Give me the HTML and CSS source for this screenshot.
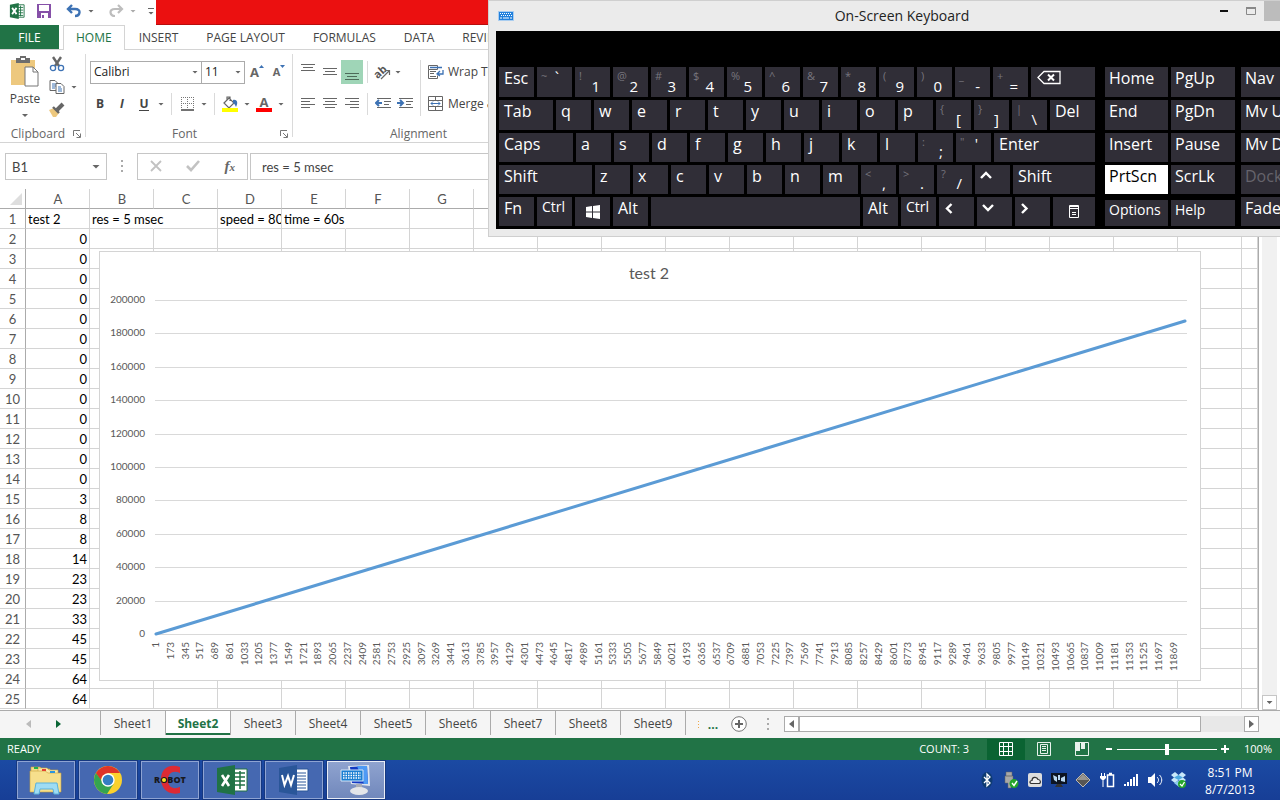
FILE: index.html
```html
<!DOCTYPE html>
<html lang="en">
<head>
<meta charset="utf-8">
<title>Spreadsheet desktop</title>
<link rel="stylesheet" href="styles.css">
</head>
<body>
<div class="desktop">
  <header class="titlebar">
    <div class="quick-access">
      <svg class="qa-logo" width="18" height="18" viewBox="0 0 18 18" aria-hidden="true"><path d="M9 2h8v14H9z" fill="#fff" stroke="#217346"/><path d="M10 5h6M10 8h6M10 11h6M10 14h6M13 3v12" stroke="#217346"/><path d="M1 2l10-2v18l-10-2z" fill="#217346"/><path d="M3.500 5.500l5 7M8.500 5.500l-5 7" stroke="#fff" stroke-width="2"/></svg>
      <button class="qa-save" aria-label="Save"><svg width="14" height="14" viewBox="0 0 14 14"><path d="M0 0h14v14H0z" fill="#8650a8"/><path d="M2 1h10v6H2zM4 9h7v5H4z" fill="#fff"/><path d="M5 11h2v3H5z" fill="#8650a8"/></svg></button>
      <button class="qa-undo" aria-label="Undo"><svg width="16" height="14" viewBox="0 0 16 14"><path d="M6 1L2 5l4 4M2 5h7c7 0 5 7 0 7" fill="none" stroke="#3d72b4" stroke-width="2.400"/></svg><i class="caret"></i></button>
      <button class="qa-redo" aria-label="Redo"><svg width="16" height="14" viewBox="0 0 16 14"><path d="M10 1l4 4-4 4M14 5H7c-7 0-5 7 0 7" fill="none" stroke="#bdbdbd" stroke-width="2.200"/></svg><i class="caret pale"></i></button>
      <button class="qa-more" aria-label="Customize"><i class="bar"></i><i class="caret"></i></button>
    </div>
    <div class="redacted"></div>
  </header>

  <nav class="ribbon-tabs">
    <a class="file" href="#file">FILE</a>
    <a class="current" href="#home">HOME</a>
    <a href="#insert">INSERT</a>
    <a href="#layout">PAGE LAYOUT</a>
    <a href="#formulas">FORMULAS</a>
    <a href="#data">DATA</a>
    <a href="#review">REVIEW</a>
  </nav>

  <section class="ribbon">
    <div class="group clipboard">
      <div class="group-body">
        <button class="paste"><svg width="30" height="32" viewBox="0 0 30 32"><path d="M1 4h24v25H1z" fill="#edc87e"/><path d="M6 2h4V0h6v2h4v5H6z" fill="#6d6d6d"/><path d="M11 2h4v2h-4z" fill="#fff"/><path d="M15 11h8l5 5v14H15z" fill="#fff" stroke="#777"/><path d="M23 11v5h5" fill="none" stroke="#777"/></svg><span>Paste</span><i class="caret"></i></button>
        <div class="clip-tools">
          <button aria-label="Cut"><svg width="16" height="16" viewBox="0 0 16 16"><path d="M4 1l6 9M12 1L6 10" stroke="#666" stroke-width="2.400"/><circle cx="4" cy="12" r="2.600" fill="#fff" stroke="#3d72b4" stroke-width="1.300"/><circle cx="12" cy="12" r="2.600" fill="#fff" stroke="#3d72b4" stroke-width="1.300"/></svg></button>
          <button aria-label="Copy"><svg width="16" height="16" viewBox="0 0 16 16"><path d="M1 1.500h5l3 3v7H1z" fill="#fff" stroke="#666"/><path d="M3 5h4M3 7h4M3 9h3" stroke="#3d72b4"/><path d="M7 4.500h5l3 3v7H7z" fill="#fff" stroke="#666"/><path d="M9 8h3M9 10h4M9 12h4" stroke="#3d72b4"/></svg><i class="caret"></i></button>
          <button aria-label="Format Painter"><svg width="16" height="16" viewBox="0 0 16 16"><path d="M0 8l5-2 5 5-3 4-3 0z" fill="#edc87e"/><path d="M4 5l6 6" stroke="#666" stroke-width="2.400"/><path d="M8 8l6-6" stroke="#666" stroke-width="4"/></svg></button>
        </div>
      </div>
      <div class="group-name"><span>Clipboard</span><svg class="launcher" width="8" height="8" viewBox="0 0 8 8"><path d="M.5 6V.5H7M3 3l4 4M7.500 3.500v4h-4" fill="none" stroke="#777"/></svg></div>
    </div>

    <div class="group font">
      <div class="group-body stack">
        <div class="tool-row">
          <span class="combo family"><select aria-label="Font"><option>Calibri</option></select></span>
          <span class="combo size"><select aria-label="Font size"><option>11</option></select></span>
          <button class="tool" aria-label="Increase font size"><b class="letter-big">A</b><svg width="5" height="14" viewBox="0 0 5 14"><path d="M0 3l2.500-3L5 3z" fill="#3d72b4"/></svg></button>
          <button class="tool" aria-label="Decrease font size"><b class="letter-small">A</b><svg width="5" height="14" viewBox="0 0 5 14"><path d="M0 0l2.500 3L5 0z" fill="#3d72b4"/></svg></button>
        </div>
        <div class="tool-row">
          <button class="tool"><b>B</b></button>
          <button class="tool"><b class="italic">I</b></button>
          <button class="tool"><b class="under">U</b></button>
          <button class="drop" aria-label="Underline styles"><i class="caret"></i></button>
          <i class="rule"></i>
          <button class="tool" aria-label="Borders"><svg width="13" height="14" viewBox="0 0 13 14"><path d="M.5 0v12M6.500 0v12M12.500 0v12M0 .5h13M0 6.500h13" stroke="#777" stroke-dasharray="1 1"/><path d="M0 13h13" stroke="#444" stroke-width="1.500"/></svg></button>
          <button class="drop" aria-label="Border styles"><i class="caret"></i></button>
          <i class="rule"></i>
          <button class="tool" aria-label="Fill color"><svg width="16" height="16" viewBox="0 0 16 16"><path d="M2 7l5-5 5 5-5 5zM5 5V1h3v4" fill="#fff" stroke="#666" stroke-width="1.200"/><path d="M11 4c5-1 5 4 3 7-1-2-1-3-3-4z" fill="#3d72b4"/><path d="M0 12h16v4H0z" fill="#ff0"/></svg></button>
          <button class="drop" aria-label="Fill colors"><i class="caret"></i></button>
          <button class="tool" aria-label="Font color"><b class="font-color">A</b></button>
          <button class="drop" aria-label="Font colors"><i class="caret"></i></button>
        </div>
      </div>
      <div class="group-name"><span>Font</span><svg class="launcher" width="8" height="8" viewBox="0 0 8 8"><path d="M.5 6V.5H7M3 3l4 4M7.500 3.500v4h-4" fill="none" stroke="#777"/></svg></div>
    </div>

    <div class="group alignment">
      <div class="group-body">
        <div class="stack">
          <div class="tool-row">
            <button class="tool" aria-label="Top align"><svg width="14" height="16" viewBox="0 0 14 16"><path d="M0 .5h14M2 3.500h10M0 6.500h14" stroke="#666"/></svg></button>
            <button class="tool" aria-label="Middle align"><svg width="14" height="16" viewBox="0 0 14 16"><path d="M0 4.500h14M2 7.500h10M0 10.500h14" stroke="#666"/></svg></button>
            <button class="tool on" aria-label="Bottom align"><svg width="14" height="16" viewBox="0 0 14 16"><path d="M0 9.500h14M2 12.500h10M0 15.500h14" stroke="#4d6b59"/></svg></button>
            <i class="rule"></i>
            <button class="tool" aria-label="Orientation"><svg width="18" height="16" viewBox="0 0 18 16"><text x="0" y="12" font-size="11" font-weight="700" fill="#555" transform="rotate(-42 6 9)">ab</text><path d="M7 15l8-8M11 6.500h4.500V11" fill="none" stroke="#666" stroke-width="1.200"/></svg></button>
            <button class="drop near" aria-label="Orientation options"><i class="caret"></i></button>
          </div>
          <div class="tool-row">
            <button class="tool" aria-label="Align left"><svg width="14" height="12" viewBox="0 0 14 12"><path d="M0 .5h14M0 3.500h9M0 6.500h14M0 9.500h9" stroke="#666"/></svg></button>
            <button class="tool" aria-label="Center"><svg width="14" height="12" viewBox="0 0 14 12"><path d="M0 .5h14M2 3.500h10M0 6.500h14M2 9.500h10" stroke="#666"/></svg></button>
            <button class="tool" aria-label="Align right"><svg width="14" height="12" viewBox="0 0 14 12"><path d="M0 .5h14M5 3.500h9M0 6.500h14M5 9.500h9" stroke="#666"/></svg></button>
            <i class="rule"></i>
            <button class="tool" aria-label="Decrease indent"><svg width="16" height="12" viewBox="0 0 16 12"><path d="M2 .5h14M9 3.500h7M9 6.500h5M2 9.500h14" stroke="#666"/><path d="M7 5H2M4 2L1 5l3 3" fill="none" stroke="#3d72b4" stroke-width="2"/></svg></button>
            <button class="tool" aria-label="Increase indent"><svg width="16" height="12" viewBox="0 0 16 12"><path d="M2 .5h14M9 3.500h7M9 6.500h5M2 9.500h14" stroke="#666"/><path d="M0 5h5M3 2l3 3-3 3" fill="none" stroke="#3d72b4" stroke-width="2"/></svg></button>
          </div>
        </div>
        <i class="rule tall"></i>
        <div class="stack">
          <button class="text-tool"><svg width="16" height="16" viewBox="0 0 16 16"><path d="M.5 1.500h9v4h-9zM.5 5.500v9h9v-3" fill="#fff" stroke="#666"/><path d="M2 7.500h6M2 9.500h4M2 12.500h6" stroke="#666"/><path d="M2 3.500h12M15 6v4h-5M12 7l-3 3 3 2" fill="none" stroke="#3d72b4" stroke-width="1.300"/></svg>Wrap Text</button>
          <button class="text-tool"><svg width="16" height="16" viewBox="0 0 16 16"><path d="M.5.5h14v14H.5zM.5 4.500h14M.5 10.500h14M7.500 1v3M7.500 11v3" fill="#fff" stroke="#666"/><path d="M3 7.500h9M5 5.500l-2 2 2 2M10 5.500l2 2-2 2" fill="none" stroke="#3d72b4"/></svg>Merge &amp; Center</button>
        </div>
      </div>
      <div class="group-name"><span>Alignment</span></div>
    </div>
  </section>

  <div class="formula-bar">
    <span class="name-box"><input aria-label="Name box" value="B1"><i class="caret large"></i></span>
    <span class="grip"></span>
    <div class="formula-tools">
      <button aria-label="Cancel"><svg width="12" height="12" viewBox="0 0 12 12"><path d="M1 1l10 10M11 1L1 11" stroke="#c2c2c2" stroke-width="1.800"/></svg></button>
      <button aria-label="Enter"><svg width="14" height="12" viewBox="0 0 14 12"><path d="M1 6l4 4 8-9" fill="none" stroke="#c2c2c2" stroke-width="2.600"/></svg></button>
      <button class="fx" aria-label="Insert function">f<small>x</small></button>
    </div>
    <input class="formula" aria-label="Formula" value="res = 5 msec">
  </div>

  <main class="workbook">
    <div class="sheet">
      <table class="cells" id="cells"></table>
      <svg class="chart" id="chart" viewBox="0 0 1100 428" role="img" aria-label="test 2"></svg>
    </div>
    <div class="v-scroll"><button aria-label="Scroll down"><i class="caret"></i></button></div>
  </main>

  <footer class="sheet-bar">
    <div class="sheet-nav">
      <button aria-label="Previous sheet"><svg width="5" height="8" viewBox="0 0 5 8"><path d="M5 0v8L0 4z" fill="#bbb"/></svg></button>
      <button aria-label="Next sheet"><svg width="5" height="8" viewBox="0 0 5 8"><path d="M0 0v8l5-4z" fill="#0b6636"/></svg></button>
    </div>
    <nav class="sheet-tabs">
      <a href="#s1">Sheet1</a><a class="current" href="#s2">Sheet2</a><a href="#s3">Sheet3</a><a href="#s4">Sheet4</a><a href="#s5">Sheet5</a><a href="#s6">Sheet6</a><a href="#s7">Sheet7</a><a href="#s8">Sheet8</a><a href="#s9">Sheet9</a>
    </nav>
    <i class="next-tab"></i>
    <button class="more">...</button>
    <button class="add" aria-label="New sheet"><svg width="16" height="16" viewBox="0 0 16 16"><circle cx="8" cy="8" r="7.300" fill="#fff" stroke="#777"/><path d="M8 4v8M4 8h8" stroke="#666" stroke-width="2"/></svg></button>
    <span class="grip"></span>
    <div class="h-scroll">
      <button aria-label="Scroll left"><svg width="5" height="8" viewBox="0 0 5 8"><path d="M5 0v8L0 4z" fill="#666"/></svg></button>
      <i class="thumb"></i><i class="track"></i>
      <button aria-label="Scroll right"><svg width="5" height="8" viewBox="0 0 5 8"><path d="M0 0v8l5-4z" fill="#666"/></svg></button>
    </div>
  </footer>

  <div class="status">
    <span class="ready">READY</span>
    <span class="count">COUNT: 3</span>
    <button class="view on" aria-label="Normal"><svg width="14" height="14" viewBox="0 0 14 14"><path d="M.5.5h13v13H.5zM4.500 0v14M9.500 0v14M0 4.500h14M0 9.500h14" fill="none" stroke="#fff"/></svg></button>
    <button class="view" aria-label="Page layout"><svg width="14" height="14" viewBox="0 0 14 14"><path d="M.5.5h13v13H.5zM3.500 2.500h7v9h-7zM5 4.500h4M5 6.500h4M5 8.500h4" fill="none" stroke="#e8f2ec"/></svg></button>
    <button class="view" aria-label="Page break preview"><svg width="14" height="14" viewBox="0 0 14 14"><path d="M.5.5h13v13H.5z" fill="none" stroke="#e8f2ec"/><path d="M0 0h5v9H0zM6 0h4v7H6z" fill="#e8f2ec"/></svg></button>
    <button class="zoom-step" aria-label="Zoom out"><svg width="8" height="8" viewBox="0 0 8 8"><path d="M1 4h6" stroke="#fff" stroke-width="2"/></svg></button>
    <input class="zoom" type="range" min="0" max="100" value="50" aria-label="Zoom">
    <button class="zoom-step" aria-label="Zoom in"><svg width="8" height="8" viewBox="0 0 8 8"><path d="M0 4h8M4 0v8" stroke="#fff" stroke-width="2"/></svg></button>
    <span class="percent">100%</span>
  </div>

  <div class="taskbar">
    <div class="apps">
      <button aria-label="File Explorer"><svg width="34" height="32" viewBox="0 0 34 32"><path d="M2 3h9l2 2h8v8H2z" fill="#f5dc86" stroke="#c9a23c" stroke-width=".6"/><path d="M9 4h9l2 2h9v20H9z" fill="#f9e9a8" stroke="#c9a23c" stroke-width=".6"/><path d="M1 7h15l3 2h13v19H1z" fill="#f6df8c" stroke="#c9a23c" stroke-width=".6"/><path d="M5 3h4v2H5z" fill="#25b04a"/><path d="M13 5h4v2h-4z" fill="#e4412f"/><path d="M21 7h5v2h-5z" fill="#2b95df"/><path d="M5 30l2-11h21l2 11h-5l-1-5H11l-1 5z" fill="#9edcf4" stroke="#5bb2dc"/></svg></button>
      <button aria-label="Chrome"><svg width="30" height="30" viewBox="0 0 30 30"><circle cx="15" cy="15" r="14" fill="#fbd12d"/><path d="M2.900 8A14 14 0 0 1 27.100 8H15l-6 3.500-1.500 4z" fill="#de3429"/><path d="M2.900 8A14 14 0 0 0 14 29l6.500-10H11z" fill="#34a44f"/><circle cx="15" cy="15" r="6.700" fill="#fff"/><circle cx="15" cy="15" r="5.300" fill="#347ec2"/></svg></button>
      <button aria-label="RobotC"><svg width="34" height="32" viewBox="0 0 34 32"><path d="M27 9V3C15-1 8 6 8 15s7 17 19 14v-6c-7 3-12 0-12-7s5-10 12-7z" fill="#dd2a34"/><text x="17" y="19" text-anchor="middle" font-size="9" font-weight="800" fill="#18181c">ROBOT</text><circle cx="11" cy="16" r="2" fill="#fbe122"/></svg></button>
      <button aria-label="Excel"><svg width="32" height="32" viewBox="0 0 32 32"><path d="M17 5h14v22H17z" fill="#fff" stroke="#207245"/><path d="M19 9h10M19 13h10M19 17h10M19 21h10M24 7v18" stroke="#207245" stroke-width="1.500"/><path d="M1 4l18-3v30L1 28z" fill="#207245"/><path d="M6 11l7 11M13 11L6 22" stroke="#fff" stroke-width="2.600"/></svg></button>
      <button aria-label="Word"><svg width="32" height="32" viewBox="0 0 32 32"><path d="M17 5h13v22H17z" fill="#fff" stroke="#2a5699"/><path d="M19 9h9M19 12h9M19 15h9M19 18h9M19 21h9M19 24h9" stroke="#2a5699"/><path d="M1 4l18-3v30L1 28z" fill="#2a5699"/><path d="M4 11l2.500 10L10 12l3 9 3-10" fill="none" stroke="#fff" stroke-width="2"/></svg></button>
      <button class="active" aria-label="On-Screen Keyboard"><svg width="34" height="32" viewBox="0 0 34 32"><path d="M9 2l21-1 1 21-19-2z" fill="#dfe5ee"/><path d="M11 3l17-1 1 18-16-1z" fill="#1238c2"/><path d="M18 2l10 0 1 18-4 0z" fill="#4f9af4"/><path d="M17 20h6v6h-6z" fill="#a9adb5"/><ellipse cx="20" cy="27" rx="9" ry="4" fill="#e3e5e9"/><path d="M2 6h22v11H2z" fill="#1b7fd2" stroke="#d4e6f7"/><path d="M4 9h18M4 11.500h18M4 14h18" stroke="#fff" stroke-width="1.400" stroke-dasharray="1.500 1"/></svg></button>
    </div>
    <div class="tray">
      <button aria-label="Bluetooth"><svg width="16" height="18" viewBox="0 0 16 18"><ellipse cx="8" cy="9" rx="5.500" ry="8" fill="#0e3b72"/><path d="M5 6l6 6-3 3V3l3 3-6 6" fill="none" stroke="#fff" stroke-width="1.300"/></svg></button>
      <button aria-label="Safely remove hardware"><svg width="16" height="18" viewBox="0 0 16 18"><path d="M3 1h6v4H3zM2 5h8v7H8v5H5v-5H2z" fill="#a8a8a8" stroke="#666" stroke-width=".5"/><circle cx="11" cy="12.500" r="4.500" fill="#25a52b"/><path d="M9 12l2 2.500 3-4.500" fill="none" stroke="#fff" stroke-width="1.400"/></svg></button>
      <button aria-label="Cloud"><svg width="16" height="16" viewBox="0 0 16 16"><rect x="1" y="1" width="14" height="14" rx="2" fill="#ddd"/><path d="M4 11.500c-2-1-1-3 1-3 0-4 5-4 6-1 3 0 3 4 1 4z" fill="#eee" stroke="#333" stroke-width="1.200"/></svg></button>
      <button aria-label="Display"><svg width="16" height="16" viewBox="0 0 16 16"><path d="M0 1h16v11H0z" fill="#0c1422"/><path d="M2 3l4 2v5L3 8zM7 3h2v5H7zM10 6l4-2v6l-4-1z" fill="#b9d8f2"/><path d="M6 12h4l2 3H4z" fill="#333"/></svg></button>
      <button aria-label="Service"><svg width="16" height="16" viewBox="0 0 16 16"><path d="M8 1l7 7-7 7-7-7z" fill="#585654" stroke="#bdb9b2"/><path d="M8 2l6 6H2z" fill="#989590"/></svg></button>
      <button aria-label="Battery"><svg width="16" height="16" viewBox="0 0 16 16"><path d="M2.500 1v3M5.500 1v3M4 7v8" stroke="#fff"/><path d="M1 4h6v2L5 8H3L1 6z" fill="#fff"/><path d="M8.500 3h6v11.500h-6zM10 1.500h3" fill="none" stroke="#fff" stroke-width="1.500"/></svg></button>
      <button aria-label="Network"><svg width="16" height="14" viewBox="0 0 16 14"><path d="M1 11h2v2H1zM4 9h2v4H4zM7 6h2v7H7zM10 4h2v9h-2zM13 1h2v12h-2z" fill="#fff"/></svg></button>
      <button aria-label="Volume"><svg width="16" height="16" viewBox="0 0 16 16"><path d="M1 5h3l4-4v14l-4-4H1z" fill="#fff"/><path d="M10 5c2 2 2 4 0 6M12.500 3c3 3 3 7 0 10" fill="none" stroke="#fff"/></svg></button>
      <button aria-label="Dropbox"><svg width="18" height="18" viewBox="0 0 18 18"><path d="M5 1L1 4l3 2.500-3 2.500 4 3 3.500-3L12 12l4-3-3-2.500L16 4l-4-3-3.500 3z" fill="#c8e8fa"/><path d="M8.500 4L13 6.500 8.500 9 4 6.500z" fill="#4da9e0"/><path d="M4 12l4.500-2.500L13 12l-4 4z" fill="#8fcdf0"/><circle cx="12" cy="13" r="4" fill="#25a52b"/><path d="M10 13l2 2 2.500-4" fill="none" stroke="#fff" stroke-width="1.300"/></svg></button>
    </div>
    <div class="clock"><span>8:51 PM</span><span>8/7/2013</span></div>
  </div>
</div>

<section class="osk" aria-label="On-Screen Keyboard">
  <header class="osk-title">
    <svg width="16" height="10" viewBox="0 0 16 10" aria-hidden="true"><path d="M.5.5h15v9H.5z" fill="#2180dc" stroke="#a9cdf0"/><path d="M2 2.500h12M3 4.500h12" stroke="#fff" stroke-dasharray="1 1"/><path d="M2 7h2M5 7h6M12 7h2" stroke="#fff"/></svg>
    <h1>On-Screen Keyboard</h1>
    <div class="osk-controls">
      <button aria-label="Minimize"><svg width="8" height="2" viewBox="0 0 8 2"><path d="M0 1h8" stroke="#111" stroke-width="2"/></svg></button>
      <button aria-label="Maximize"><svg width="10" height="8" viewBox="0 0 10 8"><path d="M.5 1h9v6.500h-9z" fill="none" stroke="#888"/><path d="M0 1h10" stroke="#888" stroke-width="2"/></svg></button>
      <button class="close" aria-label="Close"></button>
    </div>
  </header>
  <div class="osk-body">
    <div class="keys">
      <div class="key-row"><button>Esc</button><button class="dual high"><s>~</s><b>`</b></button><button class="dual"><s>!</s><b>1</b></button><button class="dual"><s>@</s><b>2</b></button><button class="dual"><s>#</s><b>3</b></button><button class="dual"><s>$</s><b>4</b></button><button class="dual"><s>%</s><b>5</b></button><button class="dual"><s>^</s><b>6</b></button><button class="dual"><s>&amp;</s><b>7</b></button><button class="dual"><s>*</s><b>8</b></button><button class="dual"><s>(</s><b>9</b></button><button class="dual"><s>)</s><b>0</b></button><button class="dual"><s>_</s><b>-</b></button><button class="dual"><s>+</s><b>=</b></button><button class="fill" aria-label="Backspace"><svg width="26" height="22" viewBox="0 0 26 22"><path d="M2 10.500l6-6h16v12H8z" fill="none" stroke="#fff" stroke-width="1.300"/><path d="M12 7.500l6 6M18 7.500l-6 6" stroke="#fff" stroke-width="2"/></svg></button></div>
      <div class="key-row"><button class="tab">Tab</button><button>q</button><button>w</button><button>e</button><button>r</button><button>t</button><button>y</button><button>u</button><button>i</button><button>o</button><button>p</button><button class="dual"><s>{</s><b>[</b></button><button class="dual"><s>}</s><b>]</b></button><button class="dual"><s>|</s><b>\</b></button><button class="fill">Del</button></div>
      <div class="key-row"><button class="caps">Caps</button><button>a</button><button>s</button><button>d</button><button>f</button><button>g</button><button>h</button><button>j</button><button>k</button><button>l</button><button class="dual"><s>:</s><b>;</b></button><button class="dual high"><s>"</s><b>'</b></button><button class="fill">Enter</button></div>
      <div class="key-row"><button class="shift">Shift</button><button>z</button><button>x</button><button>c</button><button>v</button><button>b</button><button>n</button><button>m</button><button class="dual"><s>&lt;</s><b>,</b></button><button class="dual"><s>&gt;</s><b>.</b></button><button class="dual"><s>?</s><b>/</b></button><button aria-label="Up"><svg width="12" height="20" viewBox="0 0 12 20"><path d="M1 13l5-5 5 5" fill="none" stroke="#fff" stroke-width="2.400"/></svg></button><button class="fill">Shift</button></div>
      <div class="key-row"><button>Fn</button><button class="small">Ctrl</button><button class="centered" aria-label="Windows"><svg width="14" height="14" viewBox="0 0 14 14"><path d="M0 2l6-1v5.500H0zM7 1l7-1v6.500H7zM0 7.500h6V13l-6-1zM7 7.500h7V14l-7-1z" fill="#fff"/></svg></button><button>Alt</button><button class="fill" aria-label="Space"></button><button>Alt</button><button class="small">Ctrl</button><button aria-label="Left"><svg width="10" height="22" viewBox="0 0 10 22"><path d="M7.500 7L3 11.500 7.500 16" fill="none" stroke="#fff" stroke-width="2.400"/></svg></button><button aria-label="Down"><svg width="12" height="20" viewBox="0 0 12 20"><path d="M1 8l5 5 5-5" fill="none" stroke="#fff" stroke-width="2.400"/></svg></button><button aria-label="Right"><svg width="10" height="22" viewBox="0 0 10 22"><path d="M2 7l4.500 4.500L2 16" fill="none" stroke="#fff" stroke-width="2.400"/></svg></button><button class="menu centered" aria-label="Menu"><svg width="10" height="13" viewBox="0 0 10 13"><path d="M.5.5h9v12h-9z" fill="none" stroke="#fff"/><path d="M0 1.500h10M0 3.500h10M3 7.500h4M3 9.500h4" stroke="#fff"/></svg></button></div>
    </div>
    <div class="side-keys">
      <button>Home</button><button>PgUp</button>
      <button>End</button><button>PgDn</button>
      <button>Insert</button><button>Pause</button>
      <button class="pressed">PrtScn</button><button>ScrLk</button>
      <button class="small short">Options</button><button class="small short">Help</button>
    </div>
    <div class="window-keys">
      <button>Nav</button><button>Mv Up</button><button>Mv Dn</button><button class="off">Dock</button><button>Fade</button>
    </div>
  </div>
</section>
<script src="app.js"></script>
</body>
</html>
```
FILE: styles.css
```css
* { box-sizing: border-box; }
body {
  margin: 0;
  overflow: hidden;
  background: #fff;
  color: #444;
  font: 12px/16px "Open Sans", "Noto Sans", sans-serif;
}
button, input, select { font: inherit; color: inherit; margin: 0; }
button { border: 0; padding: 0; background: none; }
button svg, button i { flex: none; }
a { color: inherit; text-decoration: none; }

.desktop { display: flex; flex-direction: column; height: 100vh; }
.caret {
  display: block;
  flex: none;
  width: 6px;
  height: 3px;
  background: #666;
  clip-path: polygon(0 0, 100% 0, 50% 100%);
}
.caret.pale { background: #aaa; }
.caret.large { width: 8px; height: 4px; }
.rule { flex: none; width: 1px; height: 22px; margin: 0 4px; background: #dadada; }

/* Title bar */
.titlebar { display: flex; height: 25px; flex: none; }
.quick-access { display: flex; width: 156px; align-items: center; padding: 0 2px 3px 9px; gap: 12px; flex: none; }
.quick-access button { display: flex; align-items: center; gap: 6px; }
.quick-access .qa-save { margin-right: 3px; }
.quick-access .qa-more { flex-direction: column; gap: 3px; }
.quick-access .qa-redo { margin-left: 2px; }
.bar { width: 6px; height: 1px; background: #666; }
.redacted { flex: 1; background: #eb1010; border-bottom: 1px solid #b80d0d; }

/* Ribbon tabs */
.ribbon-tabs { display: flex; flex: none; height: 25px; line-height: 26px; border-bottom: 1px solid #d4d4d4; }
.ribbon-tabs a { padding: 0 14px; white-space: nowrap; }
.ribbon-tabs .file { width: 59px; padding: 0; margin-right: 4px; text-align: center; background: #217346; color: #fff; }
.ribbon-tabs .current { height: 25px; padding: 0 12px; border: 1px solid #d4d4d4; border-bottom: 0; background: #fff; color: #217346; line-height: 24px; }

/* Ribbon */
.ribbon { display: flex; flex: none; height: 93px; border-bottom: 1px solid #d4d4d4; }
.group { display: flex; flex-direction: column; position: relative; padding: 6px 3px 0; }
.group::after { content: ""; position: absolute; right: 0; top: 4px; bottom: 5px; width: 1px; background: #dadada; }
.clipboard { width: 86px; }
.font { width: 207px; }
.alignment { width: 250px; padding-left: 4px; }
.group-body { display: flex; height: 70px; }
.group-name { display: flex; align-items: center; justify-content: center; line-height: 17px; color: #666; }
.group-name span { flex: 1; text-align: center; }
.launcher { margin-right: 2px; }
.group-body.stack, .stack { display: flex; flex-direction: column; gap: 8px; padding-top: 4px; }
.tool-row { display: flex; align-items: center; height: 24px; }
.tool { display: flex; align-items: center; justify-content: center; width: 22px; height: 24px; flex: none; }
.tool.on { background: #9fd5b7; }
.drop { display: flex; justify-content: center; width: 12px; }
.drop.near { width: 8px; }
.italic { font-style: italic; }
.under { border-bottom: 1px solid #444; line-height: 13px; }
.letter-big { font-size: 13px; color: #666; }
.letter-small { font-size: 11px; color: #666; }
.font-color { width: 16px; font-size: 13px; line-height: 12px; border-bottom: 4px solid #f00; color: #666; }
.paste { display: flex; flex-direction: column; align-items: center; width: 44px; }
.paste span { margin: 3px 0 7px; }
.clip-tools { display: flex; flex-direction: column; gap: 7px; padding-left: 2px; }
.clip-tools button { display: flex; align-items: center; gap: 6px; }
.rule.tall { height: 56px; margin: 4px 7px 0 4px; }
.text-tool { display: flex; align-items: center; gap: 4px; height: 24px; white-space: nowrap; }

.combo { position: relative; display: block; height: 23px; }
.combo::after { content: ""; position: absolute; right: 4px; top: 10px; width: 6px; height: 3px; background: #666; clip-path: polygon(0 0, 100% 0, 50% 100%); }
.combo select { appearance: none; width: 100%; height: 100%; padding: 0 3px; border: 1px solid #ababab; border-radius: 0; background: #fff; color: #222; }
.family { width: 112px; margin-left: 1px; }
.size { width: 43px; margin-right: 1px; }
.size select { border-left: 0; }

/* Formula bar */
.formula-bar { display: flex; flex: none; height: 46px; padding: 10px 0 9px 5px; font-family: Lato, sans-serif; font-size: 13px; }
.name-box { display: flex; align-items: center; width: 102px; padding: 0 6px; border: 1px solid #c6c6c6; }
.name-box input { flex: 1; min-width: 0; padding: 0; border: 0; outline: 0; }
.grip { width: 2px; height: 12px; margin: 7px 14px; flex: none; background: repeating-linear-gradient(#aaa 0 2px, transparent 2px 5px); }
.formula-tools { display: flex; align-items: center; justify-content: space-around; width: 111px; margin-right: 2px; border: 1px solid #c6c6c6; }
.fx { font: italic bold 15px/18px "Liberation Serif", serif; color: #666; }
.fx small { font-size: 11px; }
.formula { flex: 1; min-width: 0; padding: 0 11px; border: 1px solid #c6c6c6; outline: 0; }

/* Worksheet */
.workbook { display: flex; flex: 1; min-height: 0; border-bottom: 1px solid #ababab; }
.sheet { position: relative; flex: 1; min-width: 0; overflow: hidden; border-right: 1px solid #ababab; }
.cells { width: 100%; table-layout: fixed; border-spacing: 0; font-family: Lato, sans-serif; font-size: 13px; line-height: 18px; color: #000; }
.cells th, .cells td { padding: 1px 2px 0; height: 20px; border-right: 1px solid #d4d4d4; border-bottom: 1px solid #d4d4d4; text-align: left; white-space: nowrap; }
.cells th { font-weight: 400; text-align: center; color: #555; }
.cells thead th { padding: 1px 0 0 1px; border-bottom-color: #ababab; }
.cells tbody th, .cells thead th:first-child { border-right-color: #ababab; }
.cells td.num { text-align: right; }
.cells td.spill { border-right-color: transparent; }
.cells td.clip { overflow: hidden; }
.corner::after { content: ""; display: block; width: 12px; height: 12px; margin-left: 9px; background: #dedede; clip-path: polygon(100% 0, 100% 100%, 0 100%); }
.col-head { width: 26px; }
.col { width: 64px; }
.chart { position: absolute; left: 99px; top: 62px; width: 1102px; height: 430px; background: #fff; border: 1px solid #d4d4d4; font-family: Lato, sans-serif; font-size: 10px; fill: #595959; }
.chart .chart-title { font-size: 16px; }
.v-scroll { display: flex; align-items: flex-end; width: 15px; margin: 0 3px; background: #f1f1f1; }
.v-scroll button { display: flex; align-items: center; justify-content: center; width: 15px; height: 15px; border: 1px solid #c6c6c6; background: #fff; }

/* Sheet tabs */
.sheet-bar { display: flex; flex: none; height: 27px; background: #f5f5f5; }
.sheet-nav { display: flex; justify-content: space-between; align-items: center; width: 100px; padding: 0 39px 2px 26px; flex: none; }
.sheet-tabs { display: flex; height: 24px; line-height: 26px; border-left: 1px solid #ababab; }
.sheet-tabs a { width: 65px; text-align: center; border-right: 1px solid #ababab; }
.sheet-tabs a:first-child { border-right: 0; width: 64px; }
.sheet-tabs .current { width: 66px; background: #fff; color: #217346; font-weight: 700; border: solid #ababab; border-width: 0 1px; box-shadow: inset 0 -2px #217346; }
.next-tab { width: 1px; height: 7px; margin: 10px 7px 0 12px; background: repeating-linear-gradient(#f0a848 0 1px, transparent 1px 3px); }
.more { width: 14px; font-weight: 700; color: #217346; }
.add { display: flex; margin: 5px 10px 0 11px; }
.sheet-bar .grip { margin: 7px 15px 0 10px; }
.h-scroll { display: flex; flex: 1; height: 16px; margin: 5px 21px 0 0; background: #e8e8e8; }
.h-scroll button { display: flex; align-items: center; justify-content: center; width: 15px; border: 1px solid #ababab; background: #fff; }
.thumb { flex: 401; border: 1px solid #ababab; background: #fff; }
.track { flex: 43; }

/* Status bar */
.status { display: flex; flex: none; align-items: center; height: 22px; padding: 0 8px 0 7px; background: #217346; color: #fff; font-size: 11px; }
.ready { flex: 1; }
.count { margin-right: 18px; }
.view { display: flex; align-items: center; justify-content: center; width: 38px; height: 21px; }
.view.on { background: #0a6332; }
.zoom-step { display: flex; margin: 0 4px; }
.zoom { appearance: none; width: 100px; height: 12px; background: linear-gradient(#fff, #fff) center / 100% 1px no-repeat; }
.zoom::-webkit-slider-thumb { appearance: none; width: 4px; height: 11px; background: #fff; }
.percent { margin-left: 11px; }

/* Taskbar */
.taskbar { display: flex; flex: none; height: 40px; padding-right: 11px; background: linear-gradient(#1b4aa3, #173e96); color: #fff; }
.apps { display: flex; flex: 1; gap: 4px; padding: 1px 0 1px 17px; }
.apps button { display: flex; align-items: center; justify-content: center; width: 58px; border: 1px solid #8ea3d2; background: #4568b1; box-shadow: 0 0 0 1px #163880; }
.apps .active { border-color: #e9edf6; background: linear-gradient(#8fa3cf, #7188bc); }
.tray { display: flex; }
.tray button { display: flex; align-items: center; justify-content: center; width: 24px; }
.clock { display: flex; flex-direction: column; justify-content: center; align-items: center; width: 78px; padding-top: 1px; line-height: 17px; }

/* On-screen keyboard window */
.osk { position: absolute; left: 488px; top: 0; width: 828px; padding: 0 7px 7px; border: 1px solid #cfcfcf; background: #ebebeb; }
.osk-title { display: grid; grid-template-columns: 1fr auto 1fr; height: 30px; padding: 0 2px; align-items: center; }
.osk-title h1 { margin: 0; font-size: 14px; font-weight: 400; line-height: 20px; color: #222; }
.osk-controls { display: flex; height: 20px; align-self: start; justify-content: flex-end; }
.osk-controls button { display: flex; align-items: center; justify-content: center; width: 27px; }
.osk-controls .close { width: 42px; background: #bcbcbc; }
.osk-body { display: flex; padding: 36px 3px 3px; background: #000; }
.osk-body button { flex: none; display: flex; align-items: flex-start; width: 35px; padding: 0 5px; background: #302e37; color: #fff; font-size: 16px; line-height: 22px; white-space: nowrap; }
.keys { display: grid; flex: none; width: 596px; grid-template-rows: 30px 30px 29px 29px 29px; gap: 3px; margin-right: 10px; }
.key-row { display: flex; gap: 3px; }
.key-row .fill { flex: 1; }
.key-row .tab { width: 54px; }
.key-row .caps { width: 74px; }
.key-row .shift { width: 93px; }
.key-row .menu { width: 42px; }
.osk-body .centered { align-items: center; justify-content: center; }
.osk-body .small { font-size: 14px; line-height: 20px; }
.osk-body .dual { justify-content: space-between; padding: 0 10px 0 4px; }
.dual s { font-size: 11px; line-height: 18px; color: #77757d; text-decoration: none; }
.dual b { align-self: flex-end; font-size: 15px; font-weight: 400; line-height: 21px; }
.dual.high b { align-self: flex-start; padding-right: 3px; }
.side-keys { display: grid; flex: none; grid-template-columns: 63px 64px; grid-template-rows: 30px 30px 29px 29px 29px; gap: 3px; margin-right: 6px; }
.osk-body .side-keys button, .osk-body .window-keys button { width: auto; padding: 0 4px; }
.osk-body .short { margin-top: 3px; }
.osk-body .side-keys .pressed { background: #fff; color: #000; }
.window-keys { display: grid; flex: 1; grid-template-rows: 30px 30px 29px 29px 29px; gap: 3px; }
.osk-body .off { color: #66646c; }
```
FILE: app.js
```js
const values = ["test 2", 0, 0, 0, 0, 0, 0, 0, 0, 0, 0, 0, 0, 0, 3, 8, 8, 14, 23, 23, 33, 45, 45, 64, 64];
const letters = "ABCDEFGHIJKLMNOPQRST".split("");
const firstRow = { B: ["res = 5 msec", "spill"], D: ["speed = 80%", "clip"], E: ["time = 60s", "spill"] };

const columns = letters.map((l, i) => `<col${i < 19 ? ' class="col"' : ""}>`).join("");
const heads = letters.map((l) => `<th scope="col">${l === "T" ? "" : l}</th>`).join("");
const rows = values.map((value, r) => {
  const cells = letters.map((letter) => {
    if (letter === "A") return `<td${r ? ' class="num"' : ""}>${value}</td>`;
    const extra = r === 0 && firstRow[letter];
    return extra ? `<td class="${extra[1]}">${extra[0]}</td>` : "<td></td>";
  }).join("");
  return `<tr><th scope="row">${r + 1}</th>${cells}</tr>`;
}).join("");
document.getElementById("cells").innerHTML =
  `<colgroup><col class="col-head">${columns}</colgroup><thead><tr><th class="corner"></th>${heads}</tr></thead><tbody>${rows}</tbody>`;

const plot = { left: 55, right: 1087, top: 49, bottom: 383 };
let drawing = '<text class="chart-title" x="549" y="27" text-anchor="middle">test 2</text>';
for (let i = 0; i <= 10; i++) {
  const y = Math.round(plot.bottom - (plot.bottom - plot.top) * i / 10);
  drawing += `<path d="M${plot.left} ${y - 0.5}H${plot.right}" stroke="#d9d9d9"/>`;
  drawing += `<text x="45" y="${y + 2}" text-anchor="end">${i * 20000}</text>`;
}
for (let i = 0; i < 70; i++) {
  const x = Math.round(59 + i * 14.75);
  drawing += `<text transform="translate(${x} 390) rotate(-90)" text-anchor="end">${1 + i * 172}</text>`;
}
drawing += `<path d="M${plot.left + 1} ${plot.bottom - 1}L${plot.right - 2} 69" stroke="#5b9bd5" stroke-width="3" stroke-linecap="round"/>`;
document.getElementById("chart").innerHTML = drawing;
```
